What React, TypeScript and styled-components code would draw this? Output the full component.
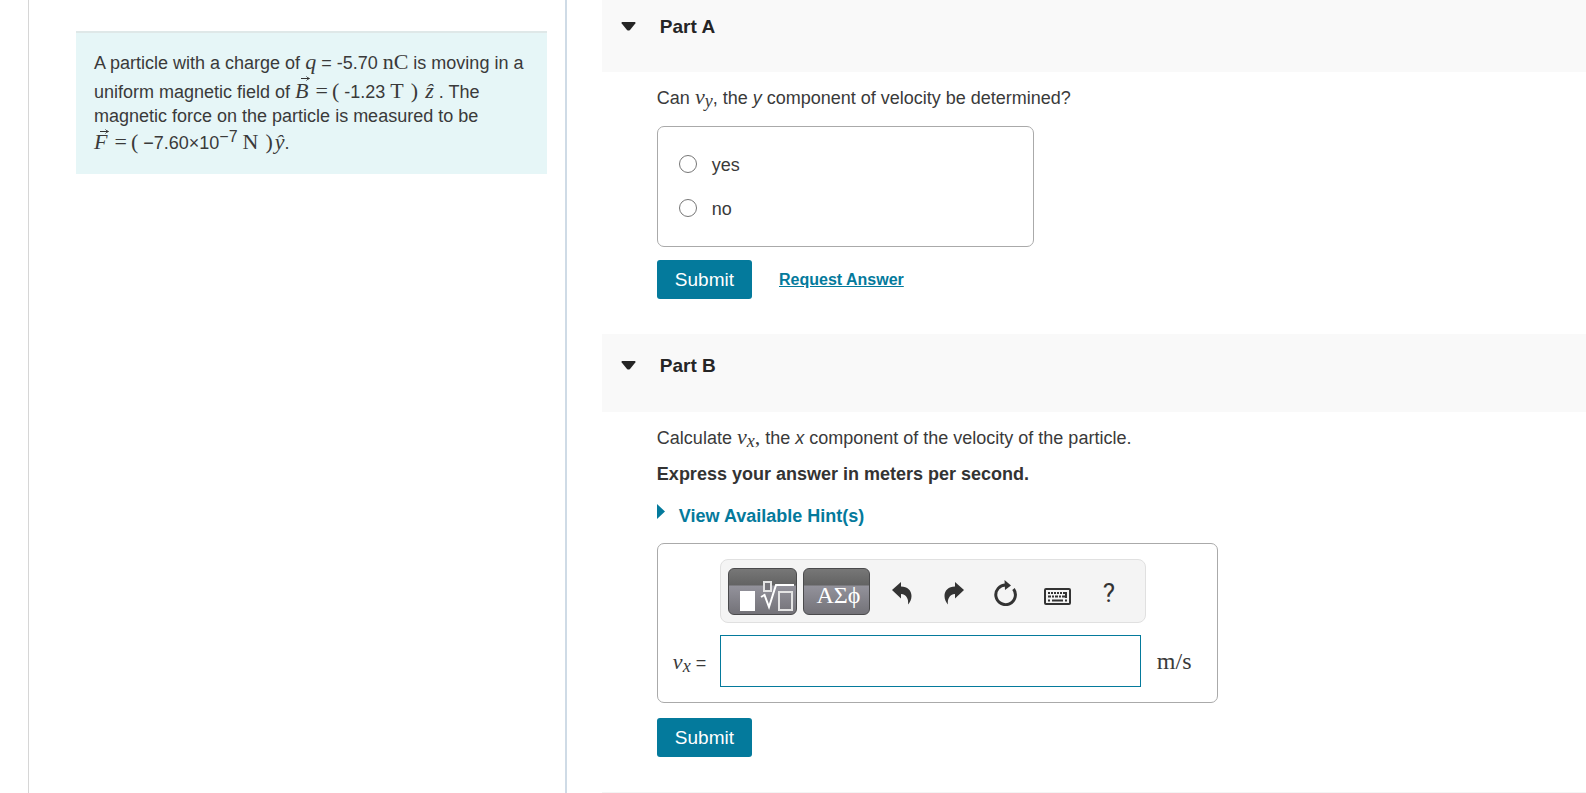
import React from "react";
import styled, { createGlobalStyle } from "styled-components";

const sans = `"Liberation Sans", Arial, sans-serif`;
const serif = `"Liberation Serif", "Times New Roman", serif`;
const teal = "#047a9c";

const GlobalStyle = createGlobalStyle`
  *, *::before, *::after { box-sizing: border-box; }
  body {
    margin: 0;
    background: #fff;
    color: #3a3a3a;
    font: 18px/24px ${sans};
  }
`;

const Page = styled.div`
  display: grid;
  grid-template-columns: minmax(480px, 19fr) 36fr;
  min-height: 100vh;
  margin-left: 28px;
  border-left: 1px solid #d6d6d6;
`;

const ProblemColumn = styled.aside`
  padding: 31px 18px 0 47px;
  border-right: 2px solid #cfdbe6;
`;

const ProblemText = styled.p`
  margin: 0;
  padding: 18px 18px 19px;
  border-top: 2px solid #dfe8e8;
  background: #e6f6f7;
`;

const PartsColumn = styled.main`
  padding-left: 35px;
  min-width: 0;
`;

const PartHeader = styled.header<{ $first?: boolean }>`
  display: flex;
  align-items: flex-start;
  gap: 24px;
  height: ${(p) => (p.$first ? 72 : 78)}px;
  padding: ${(p) => (p.$first ? 15 : 20)}px 20px 0 19px;
  background: #f9f9f9;
`;

const PartToggle = styled.button`
  display: flex;
  align-items: center;
  height: 22px;
  padding: 0;
  border: 0;
  background: none;
`;

const PartTitle = styled.h2`
  margin: 0;
  color: #252525;
  font-size: 19px;
  line-height: 24px;
`;

const PartBody = styled.section`
  padding: 14px 20px 35px 55px;
`;

const Question = styled.p<{ $gap?: number }>`
  margin: 0 0 ${(p) => p.$gap ?? 12}px;
  line-height: 24px;
`;

const Instruction = styled(Question)`
  color: #333;
  font-weight: bold;
`;

const Math = styled.span`
  font-family: ${serif};
  font-size: 22px;
  line-height: 20px;
`;

const Italic = styled(Math)`
  font-style: italic;
`;

const Relation = styled(Math)`
  margin: 0 4px 0 2px;
`;

const Closing = styled(Math)`
  margin: 0 2px;
`;

const NoWrap = styled.span`
  white-space: nowrap;
`;

const Sub = styled.sub`
  font-size: 18px;
  line-height: 0;
  vertical-align: -3px;
`;

const Sup = styled.sup`
  font-size: 16px;
  line-height: 0;
  vertical-align: 7px;
`;

const Accented = styled(Italic)<{ $rise: number }>`
  position: relative;
  display: inline-block;
  padding-top: ${(p) => p.$rise}px;
`;

const AccentMark = styled.svg`
  position: absolute;
  top: 0;
  left: 4px;
`;

const Choices = styled.fieldset`
  display: flex;
  flex-direction: column;
  gap: 20px;
  max-width: 377px;
  margin: 0 0 13px;
  padding: 26px 21px 25px;
  border: 1px solid #aaa;
  border-radius: 7px;
`;

const Choice = styled.label`
  display: flex;
  align-items: flex-start;
  gap: 15px;
`;

const Radio = styled.input`
  width: 18px;
  height: 18px;
  margin: 2px 0 0;
`;

const Actions = styled.div`
  display: flex;
  align-items: center;
  gap: 27px;
`;

const SubmitButton = styled.button`
  height: 39px;
  padding: 0 18px;
  border: 0;
  border-radius: 3px;
  background: ${teal};
  color: #fff;
  font: 19px/24px ${sans};
`;

const RequestLink = styled.a`
  color: ${teal};
  font-size: 16px;
  font-weight: bold;
`;

const HintButton = styled.button`
  display: flex;
  align-items: flex-start;
  gap: 14px;
  margin: 0 0 15px;
  padding: 0;
  border: 0;
  background: none;
  color: ${teal};
  font: bold 18px/24px ${sans};
`;

const AnswerPanel = styled.div`
  display: grid;
  grid-template-columns: 47px minmax(0, 1fr) 61px;
  row-gap: 12px;
  align-items: center;
  max-width: 561px;
  margin-bottom: 15px;
  padding: 15px;
  border: 1px solid #aaa;
  border-radius: 7px;
`;

const Toolbar = styled.div`
  grid-column: 2 / 4;
  display: flex;
  align-items: center;
  height: 64px;
  margin-right: 56px;
  padding: 0 7px;
  border: 1px solid #e0e0e0;
  border-radius: 8px;
  background: #f4f4f4;
`;

const PaletteButton = styled.button`
  height: 47px;
  margin-right: 6px;
  padding: 0;
  border: 1px solid #4a4a4c;
  border-radius: 6px;
  background: linear-gradient(#777 0, #636363 16px, #93929b 17px, #737278 100%);
  color: #fff;
`;

const TemplateButton = styled(PaletteButton)`
  width: 69px;

  svg {
    display: block;
  }
`;

const SymbolButton = styled(PaletteButton)`
  width: 67px;
  padding: 8px 0 0 4px;
  font: 24px/24px ${serif};
`;

const ToolIcons = styled.div`
  flex: 1;
  display: flex;
  justify-content: space-between;
  padding: 4px 15px 0 12px;
`;

const IconButton = styled.button`
  display: flex;
  align-items: center;
  justify-content: center;
  width: 28px;
  height: 30px;
  padding: 0;
  border: 0;
  background: none;
  color: #333;
  font: 26px/24px Roboto, ${sans};
`;

const AnswerLabel = styled.label`
  padding-top: 4px;
`;

const AnswerInput = styled.input`
  width: 100%;
  height: 52px;
  padding: 0 8px;
  border: 1px solid ${teal};
  font: 18px/24px ${sans};
`;

const Unit = styled.span`
  padding-left: 16px;
  font: 24px/24px ${serif};
`;

const NextPart = styled.div`
  height: 1px;
  background: #f4f4f4;
`;

const VectorArrow = () => (
  <AccentMark width="12" height="6" viewBox="0 0 12 6" aria-hidden="true">
    <path d="M2 3.500H10M7.500 1.500Q8.500 3 10.500 3.500Q8.500 4 7.500 5.500" fill="none" stroke="#333" strokeWidth="1" />
  </AccentMark>
);

const DownTriangle = () => (
  <svg width="15" height="9" viewBox="0 0 15 9" aria-hidden="true">
    <path d="M1 0H14Q15 .5 14.300 1.500L9 8Q7.500 9 6 8L.7 1.500Q0 .5 1 0Z" fill="#252525" />
  </svg>
);

const UndoArrow = ({ flipped }: { flipped?: boolean }) => (
  <svg width="20" height="23" viewBox="0 0 20 23" aria-hidden="true">
    <path
      transform={flipped ? "translate(20 0) scale(-1 1)" : undefined}
      d="M0 8L9 0V4.500C15.500 4.500 19.500 8.500 19.500 14C19.500 17.500 18 20.500 16 22.500C16.800 17 14.500 12.500 9 12V16.500Z"
      fill="currentColor"
    />
  </svg>
);

export default function App() {
  return (
    <>
      <GlobalStyle />
      <Page>
        <ProblemColumn>
          <ProblemText>
            A particle with a charge of <Italic>q</Italic> = -5.70 <Math>nC</Math> is moving in a uniform magnetic
            field of{" "}
            <NoWrap>
              <Accented $rise={6}>
                B<VectorArrow />
              </Accented>{" "}
              <Relation>=</Relation>
              <Math>(</Math> -1.23 <Math>T</Math> <Closing>)</Closing> <Italic>ẑ</Italic> .
            </NoWrap>{" "}
            The magnetic force on the particle is measured to be{" "}
            <NoWrap>
              <Accented $rise={4}>
                F<VectorArrow />
              </Accented>{" "}
              <Relation>=</Relation>
              <Math>(</Math> −7.60×10<Sup>−7</Sup> <Math>N</Math> <Closing>)</Closing>
              <Italic>ŷ</Italic>.
            </NoWrap>
          </ProblemText>
        </ProblemColumn>

        <PartsColumn>
          <PartHeader $first>
            <PartToggle aria-label="Collapse Part A">
              <DownTriangle />
            </PartToggle>
            <PartTitle>Part A</PartTitle>
          </PartHeader>
          <PartBody>
            <Question $gap={16}>
              Can{" "}
              <Italic>
                v<Sub>y</Sub>
              </Italic>
              , the <em>y</em> component of velocity be determined?
            </Question>
            <Choices aria-label="Answer choices">
              <Choice>
                <Radio type="radio" name="determined" value="yes" />
                yes
              </Choice>
              <Choice>
                <Radio type="radio" name="determined" value="no" />
                no
              </Choice>
            </Choices>
            <Actions>
              <SubmitButton>Submit</SubmitButton>
              <RequestLink href="#request">Request Answer</RequestLink>
            </Actions>
          </PartBody>

          <PartHeader>
            <PartToggle aria-label="Collapse Part B">
              <DownTriangle />
            </PartToggle>
            <PartTitle>Part B</PartTitle>
          </PartHeader>
          <PartBody>
            <Question>
              Calculate{" "}
              <Italic>
                v<Sub>x</Sub>
              </Italic>
              <Math>,</Math> the <em>x</em> component of the velocity of the particle.
            </Question>
            <Instruction $gap={18}>Express your answer in meters per second.</Instruction>
            <HintButton>
              <svg width="8" height="15" viewBox="0 0 8 15" aria-hidden="true">
                <path d="M0 0L8 7.500L0 15Z" fill={teal} />
              </svg>
              View Available Hint(s)
            </HintButton>
            <AnswerPanel>
              <Toolbar role="toolbar" aria-label="Equation tools">
                <TemplateButton aria-label="Templates">
                  <svg width="67" height="45" viewBox="0 0 67 45" aria-hidden="true">
                    <rect x="11" y="22" width="15" height="20" fill="#fff" />
                    <path d="M32 28L35.500 26L40 38L47 16H65" fill="none" stroke="#fff" strokeWidth="2" />
                    <rect x="35" y="13" width="7" height="9" fill="#77767c" stroke="#e4e4e4" strokeWidth="2" />
                    <rect x="50" y="23" width="13" height="18" fill="none" stroke="#e4e4e4" strokeWidth="2" />
                  </svg>
                </TemplateButton>
                <SymbolButton aria-label="Symbols">ΑΣϕ</SymbolButton>
                <ToolIcons>
                  <IconButton aria-label="Undo">
                    <UndoArrow />
                  </IconButton>
                  <IconButton aria-label="Redo">
                    <UndoArrow flipped />
                  </IconButton>
                  <IconButton aria-label="Reset">
                    <svg width="24" height="26" viewBox="0 0 24 26" aria-hidden="true">
                      <path d="M13 5A9.800 9.800 0 1 0 20.500 9" fill="none" stroke="currentColor" strokeWidth="3" />
                      <path d="M11.500 0L18 5.500L12 10Z" fill="currentColor" />
                    </svg>
                  </IconButton>
                  <IconButton aria-label="Keyboard shortcuts">
                    <svg width="27" height="24" viewBox="0 0 27 24" aria-hidden="true">
                      <rect x="1" y="8" width="25" height="15" rx="1" fill="none" stroke="currentColor" strokeWidth="2" />
                      <path d="M4 12H21" stroke="currentColor" strokeWidth="2" strokeDasharray="2 1" />
                      <path d="M4 15.500H21" stroke="currentColor" strokeWidth="2" strokeDasharray="3 1 2 1" />
                      <path d="M4 19.500H6M8 19.500H19M21 19.500H23M22 11V17" stroke="currentColor" strokeWidth="2" />
                    </svg>
                  </IconButton>
                  <IconButton aria-label="Help">?</IconButton>
                </ToolIcons>
              </Toolbar>
              <AnswerLabel htmlFor="vx">
                <Italic>
                  v<Sub>x</Sub>
                </Italic>{" "}
                =
              </AnswerLabel>
              <AnswerInput id="vx" type="text" />
              <Unit>m/s</Unit>
            </AnswerPanel>
            <SubmitButton>Submit</SubmitButton>
          </PartBody>
          <NextPart />
        </PartsColumn>
      </Page>
    </>
  );
}
